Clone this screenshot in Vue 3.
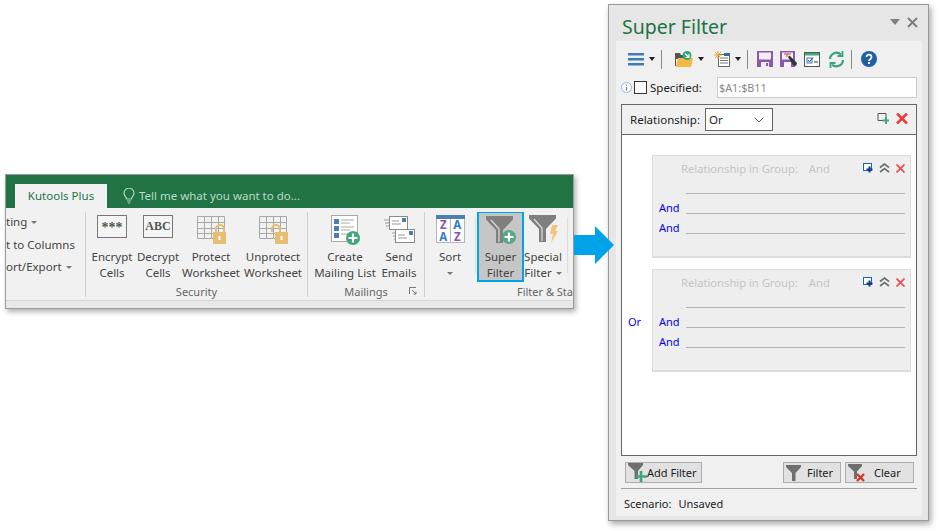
<script setup>
const groups = [{ id: 1, or: false }, { id: 2, or: true }]
</script>

<template>
  <div class="page">
    <!-- ribbon -->
    <div class="ribbon">
      <div class="tabbar">
        <div class="tab">Kutools Plus</div>
        <svg class="bulb" width="14" height="16" viewBox="0 0 14 16" fill="none" stroke="#a9d5bd" stroke-width="1.2">
          <path d="M4.5 11C4.5 8.5 2 8 2 5.2a5 5 0 0 1 10 0C12 8 9.500 8.500 9.500 11z" />
          <path d="M5 13h4M5.800 15h2.400" />
        </svg>
        <span class="tell">Tell me what you want to do...</span>
      </div>
      <div class="ribbon-body">
        <div class="rgroup g-left">
          <div class="lines">
            <div class="l1">ting <i class="drop"></i></div>
            <div class="l2">t to Columns</div>
            <div class="l3">ort/Export <i class="drop"></i></div>
          </div>
        </div>
        <div class="rgroup g-security">
          <div class="btns">
            <div class="rbtn" style="width:46px">
              <div class="ico"><div class="keybox stars">***</div></div>
              <div class="cap">Encrypt<br />Cells</div>
            </div>
            <div class="rbtn" style="width:46px">
              <div class="ico"><div class="keybox abc">ABC</div></div>
              <div class="cap">Decrypt<br />Cells</div>
            </div>
            <div class="rbtn" style="width:60px">
              <div class="ico">
                <svg width="32" height="30" viewBox="0 0 32 30" fill="none">
                  <path d="M2.500 1.500h27v22h-27zM2.500 7.500h27M2.500 13.500h27M2.500 18.500h27M9.500 1.500v22M16.500 1.500v22M23.500 1.500v22" stroke="#a8a8a8" />
                  <path d="M21 17v-3a4 4 0 0 1 8 0v3" stroke="#e6bd72" stroke-width="2" />
                  <rect x="18" y="17" width="13" height="12" fill="#e6bd72" />
                  <rect x="23.500" y="21" width="2" height="4" fill="#fff" />
                </svg>
              </div>
              <div class="cap">Protect<br />Worksheet</div>
            </div>
            <div class="rbtn" style="width:64px">
              <div class="ico">
                <svg width="32" height="30" viewBox="0 0 32 30" fill="none">
                  <path d="M2.500 1.500h27v22h-27zM2.500 7.500h27M2.500 13.500h27M2.500 18.500h27M9.500 1.500v22M16.500 1.500v22M23.500 1.500v22" stroke="#a8a8a8" />
                  <path d="M15 17v-3a4 4 0 0 1 8 0v3" stroke="#e6bd72" stroke-width="2" />
                  <rect x="18" y="17" width="13" height="12" fill="#e6bd72" />
                  <rect x="23.500" y="21" width="2" height="4" fill="#fff" />
                </svg>
              </div>
              <div class="cap">Unprotect<br />Worksheet</div>
            </div>
          </div>
          <div class="glabel">Security</div>
        </div>
        <div class="rgroup g-mail">
          <div class="btns">
            <div class="rbtn" style="width:70px">
              <div class="ico">
                <svg width="32" height="30" viewBox="0 0 32 30">
                  <rect x="2.500" y="0.500" width="26" height="26" fill="#fff" stroke="#a8a8a8" />
                  <path d="M5 4h5v5H5zM5 11h5v5H5zM5 18h5v5H5z" fill="#4a7fb5" />
                  <path d="M12 5h13M12 8h9M12 12h13M12 15h9M12 19h7" stroke="#a8a8a8" fill="none" />
                  <circle cx="24" cy="23" r="7" fill="#3fa77a" />
                  <path d="M24 18.500v9M19.500 23h9" stroke="#fff" stroke-width="2.200" />
                </svg>
              </div>
              <div class="cap">Create<br />Mailing List</div>
            </div>
            <div class="rbtn" style="width:38px">
              <div class="ico">
                <svg width="32" height="30" viewBox="0 0 32 30">
                  <path d="M1 5h5M2 8h4M3 11h3M9 18h4M10 21h3M11 24h2" stroke="#999" fill="none" />
                  <rect x="6.500" y="1.500" width="18" height="13" fill="#fff" stroke="#8a8a8a" />
                  <path d="M9 6h7M9 9h9" stroke="#999" fill="none" />
                  <rect x="19" y="3" width="4" height="4" fill="#4a7fb5" />
                  <rect x="12.500" y="14.500" width="19" height="13" fill="#fff" stroke="#8a8a8a" />
                  <path d="M15 20h7M15 23h9" stroke="#999" fill="none" />
                  <rect x="26" y="16" width="4" height="4" fill="#4a7fb5" />
                </svg>
              </div>
              <div class="cap">Send<br />Emails</div>
            </div>
          </div>
          <div class="glabel">Mailings</div>
          <svg class="launcher" width="8" height="8" viewBox="0 0 8 8" fill="none" stroke="#777">
            <path d="M.5 7V.5H7M3 3l4 4M4.500 7H7V4.500" />
          </svg>
        </div>
        <div class="rgroup g-filter">
          <div class="btns">
            <div class="rbtn" style="width:46px">
              <div class="sort">
                <div class="sortbar"></div>
                <div class="sortgrid">
                  <div class="sc"><b class="pu">Z</b><b class="bl">A</b></div>
                  <div class="sc"><b class="bl">A</b><b class="pu">Z</b></div>
                </div>
              </div>
              <div class="cap">Sort<br /><i class="drop"></i></div>
            </div>
            <i class="minisep"></i>
            <div class="rbtn super" style="width:47px">
              <div class="ico">
                <svg width="32" height="30" viewBox="0 0 32 30">
                  <path d="M1 0h27v3.500L18 14v13h-7V14L1 3.500z" fill="#7f7f7f" />
                  <path d="M6 4l8 9v13" fill="none" stroke="#d8d8d8" stroke-width="1.300" />
                  <circle cx="24" cy="21" r="7" fill="#54a884" />
                  <path d="M24 16.500v9M19.500 21h9" stroke="#fff" stroke-width="2.200" />
                </svg>
              </div>
              <div class="cap">Super<br />Filter</div>
            </div>
            <div class="rbtn" style="width:38px">
              <div class="ico">
                <svg width="32" height="30" viewBox="0 0 32 30">
                  <path d="M2 0h27v3.500L19 14v13h-7V14L2 3.500z" fill="#7f7f7f" />
                  <path d="M7 4l8 9v13" fill="none" stroke="#d8d8d8" stroke-width="1.300" />
                  <path d="M25 10h6l-3 6h3l-7 12 2-9h-3z" fill="#efc67b" />
                </svg>
              </div>
              <div class="cap">Special<br />Filter <i class="drop"></i></div>
            </div>
            <i class="minisep endsep"></i>
          </div>
          <div class="glabel cut">Filter &amp; Sta</div>
        </div>
      </div>
      <div class="ribbon-foot"></div>
    </div>

    <!-- arrow -->
    <svg class="arrow" width="40" height="38" viewBox="0 0 40 38">
      <path d="M0 9h21V0l19 19-19 19V29H0z" fill="#00a2e8" />
    </svg>

    <!-- panel -->
    <div class="panel">
      <div class="ptitle">
        <span class="ptext">Super Filter</span>
        <span class="pctrl">
          <svg width="10" height="6" viewBox="0 0 10 6"><path d="M0 0h10L5 6z" fill="#7f7f7f" /></svg>
          <svg width="11" height="11" viewBox="0 0 11 11"><path d="M1 1l9 9M10 1l-9 9" stroke="#7f7f7f" stroke-width="2" /></svg>
        </span>
      </div>
      <div class="pinner">
        <div class="toolbar">
          <svg class="t-menu" width="16" height="13" viewBox="0 0 16 13"><path d="M0 0h16v2.500H0zM0 5h16v2.500H0zM0 10h16v2.500H0z" fill="#3f7cbd" /></svg>
          <i class="caret"></i>
          <i class="tsep"></i>
          <svg class="t-folder" width="18" height="16" viewBox="0 0 18 16">
            <path d="M0 2h5l1 2h4v4H1v7H0z" fill="#555" />
            <path d="M1 15l2-8h15l-2 9H1z" fill="#f4b942" />
            <circle cx="12" cy="4.500" r="4.500" fill="#2fa37a" />
            <path d="M10 2.500l3.500 3.500M14 3v3.500h-3.500" stroke="#fff" stroke-width="1.200" fill="none" />
          </svg>
          <i class="caret"></i>
          <svg class="t-new" width="16" height="16" viewBox="0 0 16 16">
            <rect x="4.500" y="3.500" width="11" height="12" fill="#fff" stroke="#666" />
            <path d="M6 7h8M6 9.500h8M6 12h8" stroke="#777" fill="none" />
            <rect x="10" y="2" width="6" height="3" fill="#2f6d9e" />
            <path d="M4 0v8M0 4h8M1 1l6 6M7 1L1 7" stroke="#eea23a" fill="none" />
          </svg>
          <i class="caret"></i>
          <i class="tsep"></i>
          <svg class="t-save" width="16" height="16" viewBox="0 0 16 16">
            <path d="M0 0h16v16H0z" fill="#8a5aa8" />
            <path d="M2 1.500h12v7H2z" fill="#f3edf7" />
            <path d="M4 11h8v5H4z" fill="#f3edf7" />
            <path d="M9 12h2v3H9z" fill="#8a5aa8" />
          </svg>
          <svg class="t-saveas" width="17" height="16" viewBox="0 0 17 16">
            <path d="M0 0h15v16H0z" fill="#8a5aa8" />
            <path d="M2 1.500h11v7H2z" fill="#f7f3fa" />
            <path d="M4 11h7v5H4z" fill="#f7f3fa" />
            <path d="M4 3h7M7 3v3" stroke="#d23c3c" fill="none" />
            <path d="M8 6l1.500-1.500L17 12l-1 3-3-1z" fill="#333" />
          </svg>
          <svg class="t-form" width="16" height="15" viewBox="0 0 16 15">
            <rect x="0.500" y="0.500" width="15" height="14" fill="#fff" stroke="#555" />
            <rect x="1" y="1" width="14" height="2.500" fill="#3fa77a" />
            <rect x="3" y="6" width="5" height="5" fill="#fff" stroke="#3f7cbd" />
            <path d="M4 8l1.500 2L9 5.500" stroke="#1f4f86" fill="none" />
            <path d="M10 10h4" stroke="#333" />
          </svg>
          <svg class="t-sync" width="17" height="17" viewBox="0 0 17 17" fill="none" stroke="#36a57c" stroke-width="2.200">
            <path d="M2 8a6.500 6.500 0 0 1 11-4.500" />
            <path d="M15 9a6.500 6.500 0 0 1-11 4.500" />
            <path d="M14.500 0v5h-5M2.500 17v-5h5" stroke-width="1.800" />
          </svg>
          <i class="tsep"></i>
          <svg class="t-help" width="16" height="16" viewBox="0 0 16 16">
            <circle cx="8" cy="8" r="8" fill="#1f5fa5" />
            <path d="M5.500 6a2.500 2.500 0 1 1 3.800 2.200C8.500 8.700 8 9 8 10" stroke="#fff" stroke-width="1.800" fill="none" />
            <rect x="7" y="11" width="2" height="2" fill="#fff" />
          </svg>
        </div>

        <div class="specrow">
          <svg width="11" height="11" viewBox="0 0 11 11">
            <circle cx="5.500" cy="5.500" r="5" fill="#fff" stroke="#8fb4dc" />
            <path d="M5.500 2.500v1.200M5.500 5v3.500" stroke="#4a7fb5" />
          </svg>
          <i class="chk"></i>
          <span class="speclabel">Specified:</span>
          <div class="specinput">$A1:$B11</div>
        </div>

        <div class="box">
          <div class="relrow">
            <span>Relationship:</span>
            <div class="select">
              <span>Or</span>
              <svg width="10" height="6" viewBox="0 0 10 6" fill="none" stroke="#555"><path d="M.5.500L5 5 9.500.5" /></svg>
            </div>
            <span class="relicons">
              <svg width="12" height="11" viewBox="0 0 12 11">
                <path d="M8 7.500H1V.5h8v4" fill="none" stroke="#555" />
                <path d="M9 4v7M5.500 7.500H12" stroke="#3fa77a" stroke-width="2" />
              </svg>
              <svg width="12" height="11" viewBox="0 0 12 11"><path d="M1 .5l10 10M11 .5l-10 10" stroke="#ee3b3b" stroke-width="2.600" /></svg>
            </span>
          </div>

          <div class="groups">
            <div v-for="g in groups" :key="g.id" class="grow">
              <div class="orcol"><span v-if="g.or">Or</span></div>
              <div class="group">
                <div class="ghead">
                  <span class="gt">Relationship in Group:</span>
                  <span class="ga">And</span>
                  <span class="gicons">
                    <svg width="10" height="10" viewBox="0 0 10 10">
                      <rect x="0.500" y="0.500" width="8" height="7" fill="#fff" stroke="#1668b5" />
                      <path d="M6.500 3.500v6M3.500 6.500h6" stroke="#123a80" stroke-width="2" />
                    </svg>
                    <svg width="11" height="10" viewBox="0 0 11 10" fill="none" stroke="#6e6e6e" stroke-width="1.600">
                      <path d="M1 4.500L5.500 1 10 4.500M1 9l4.500-3.500L10 9" />
                    </svg>
                    <svg width="9" height="9" viewBox="0 0 9 9"><path d="M.5.500l8 8M8.500.5l-8 8" stroke="#ee5050" stroke-width="1.800" /></svg>
                  </span>
                </div>
                <div class="cond"><span class="andl"></span><span class="line"></span></div>
                <div class="cond"><span class="andl">And</span><span class="line"></span></div>
                <div class="cond"><span class="andl">And</span><span class="line"></span></div>
              </div>
            </div>
          </div>
        </div>

        <div class="footbtns">
          <div class="fbtn f-add">
            <svg width="21" height="19" viewBox="0 0 21 19">
              <path d="M0 0h15v2L10 8v8H6.500V8L0 2z" fill="#6f6f6f" />
              <path d="M13 8v11M8 13.500h11" stroke="#3fa77a" stroke-width="2.600" />
            </svg>
            <span>Add Filter</span>
          </div>
          <div class="spacer"></div>
          <div class="fbtn f-filter">
            <svg width="15" height="16" viewBox="0 0 15 16">
              <path d="M0 0h15v2L9.500 8v8H6V8L0 2z" fill="#6f6f6f" />
            </svg>
            <span>Filter</span>
          </div>
          <div class="fbtn f-clear">
            <svg width="18" height="18" viewBox="0 0 18 18">
              <path d="M0 0h14v2L9 7.500V15H6V7.500L0 2z" fill="#6f6f6f" />
              <path d="M9 10l7 7M16 10l-7 7" stroke="#d8352a" stroke-width="2.400" />
            </svg>
            <span>Clear</span>
          </div>
        </div>
        <div class="scenario">
          <span>Scenario:</span><span class="sv">Unsaved</span>
        </div>
      </div>
    </div>
  </div>
</template>

<style>
html, body {
  background: #fff;
}
</style>

<style scoped>
.page {
  display: flex;
  align-items: flex-start;
  width: 939px;
  height: 531px;
  padding-left: 5px;
  box-sizing: border-box;
  overflow: hidden;
  background: #fff;
  font-family: "Noto Sans", "Open Sans", sans-serif;
  font-size: 11.5px;
  color: #222;
}

/* ribbon */
.ribbon {
  width: 569px;
  margin-top: 174px;
  flex: none;
  background: #f1f1f1;
  border: 1px solid #9a9a9a;
  box-sizing: border-box;
  box-shadow: 2px 3px 5px rgba(0, 0, 0, 0.3);
  color: #444;
}
.tabbar {
  display: flex;
  align-items: center;
  height: 33px;
  background: #217346;
}
.tab {
  align-self: flex-end;
  width: 92px;
  height: 24px;
  margin-left: 9px;
  background: #f1f1f1;
  color: #217346;
  text-align: center;
  line-height: 24px;
}
.bulb {
  margin: 8px 0 0 15px;
}
.tell {
  margin: 8px 0 0 3px;
  color: #b7dcc7;
}
.ribbon-body {
  display: flex;
  height: 92px;
  padding-top: 4px;
  box-sizing: border-box;
}
.rgroup {
  position: relative;
  flex: none;
  border-right: 1px solid #d0d0d0;
  height: 85px;
  box-sizing: border-box;
}
.g-left {
  width: 80px;
  overflow: hidden;
}
.g-security {
  width: 222px;
}
.g-mail {
  width: 117px;
}
.g-filter {
  width: 148px;
  border-right: none;
  overflow: hidden;
}
.lines {
  margin-top: -1px;
  line-height: 22.5px;
  white-space: nowrap;
}
.btns {
  display: flex;
  height: 72px;
}
.g-security .btns {
  padding-left: 3px;
}
.g-mail .btns {
  padding-left: 2px;
}
.g-filter .btns {
  padding-left: 2px;
  padding-top: 2px;
  margin-top: -2px;
}
.rbtn {
  flex: none;
  display: flex;
  flex-direction: column;
  align-items: center;
  box-sizing: border-box;
  white-space: nowrap;
}
.ico {
  height: 32px;
  margin-top: 3px;
  display: flex;
  align-items: flex-start;
  justify-content: center;
}
.cap {
  margin-top: 2px;
  line-height: 16px;
  text-align: center;
}
.glabel {
  text-align: center;
  color: #666;
  line-height: 16px;
  font-size: 11px;
}
.g-filter .glabel.cut {
  text-align: right;
}
.launcher {
  position: absolute;
  right: 7px;
  bottom: 2px;
}
.keybox {
  width: 30px;
  height: 23px;
  border: 1px solid #777;
  background: #f4f4f4;
  box-sizing: border-box;
  text-align: center;
  font-family: "Liberation Serif", serif;
  font-weight: bold;
  color: #555;
}
.stars {
  font-size: 14px;
  line-height: 23px;
}
.abc {
  font-size: 12px;
  line-height: 21px;
}
.drop {
  display: inline-block;
  width: 0;
  height: 0;
  border: 3px solid transparent;
  border-top: 3px solid #777;
  border-bottom: none;
  vertical-align: 2px;
  margin-left: 1px;
}
.minisep {
  width: 1px;
  height: 56px;
  margin: 5px 1px 0 2px;
  background: #dcdcdc;
  flex: none;
}
.endsep {
  margin-left: 5px;
}
.super {
  height: 71px;
  margin-top: -1px;
  border: 2px solid #00a2e8;
  background: #c6c6c6;
}
.super .ico {
  margin-top: 3px;
}
.super .cap {
  margin-top: 3px;
}
.sort {
  width: 29px;
  height: 28px;
  margin-top: 3px;
  margin-bottom: 4px;
  border: 1px solid #b5b5b5;
  border-top: none;
  background: #fff;
  box-sizing: border-box;
}
.sortbar {
  height: 4px;
  margin: 0 -1px;
  background: #4a7fb5;
}
.sortgrid {
  display: grid;
  grid-template-columns: 1fr 1fr;
}
.sc {
  display: flex;
  flex-direction: column;
  align-items: center;
  height: 23px;
  line-height: 11.5px;
  font-size: 11.5px;
}
.sc + .sc {
  border-left: 1px solid #b5b5b5;
}
.sc b {
  font-weight: 700;
}
.pu {
  color: #8a4fb5;
}
.bl {
  color: #2f7cc9;
}
.ribbon-foot {
  height: 7px;
  background: #e8e8e8;
  border-top: 1px solid #d6d6d6;
}

/* arrow */
.arrow {
  flex: none;
  margin-top: 226px;
  margin-right: -6px;
  position: relative;
  z-index: 1;
}

/* panel */
.panel {
  width: 321px;
  height: 517px;
  margin-top: 4px;
  flex: none;
  display: flex;
  flex-direction: column;
  background: #e6e6e6;
  border: 1px solid #9a9a9a;
  box-sizing: border-box;
  box-shadow: 2px 3px 6px rgba(0, 0, 0, 0.35);
  color: #222;
}
.ptitle {
  height: 36px;
  flex: none;
  display: flex;
  align-items: center;
  justify-content: space-between;
  padding: 0 10px 0 13px;
}
.ptext {
  font-size: 19.5px;
  color: #217346;
  margin-top: 7px;
}
.pctrl {
  display: flex;
  align-items: center;
  gap: 7px;
  margin-top: -2px;
}
.pinner {
  flex: 1;
  min-height: 0;
  margin: 0 6px 4px 7px;
  padding: 0 5px;
  background: #f0f0f0;
  display: flex;
  flex-direction: column;
}
.toolbar {
  display: flex;
  align-items: center;
  height: 36px;
  flex: none;
  padding-left: 7px;
}
.caret {
  width: 0;
  height: 0;
  border: 3.5px solid transparent;
  border-top: 4px solid #222;
  border-bottom: none;
  margin-left: 5px;
}
.tsep {
  width: 1px;
  height: 19px;
  background: #888;
  margin-left: 6px;
}
.t-folder {
  margin-left: 13px;
}
.t-new {
  margin-left: 10px;
}
.t-save {
  margin-left: 9px;
}
.t-saveas {
  margin-left: 7px;
}
.t-form {
  margin-left: 7px;
}
.t-sync {
  margin-left: 8px;
}
.t-help {
  margin-left: 9px;
}
.specrow {
  display: flex;
  align-items: center;
  height: 21px;
  flex: none;
}
.chk {
  width: 13px;
  height: 13px;
  border: 1px solid #333;
  background: #fff;
  margin-left: 2px;
  box-sizing: border-box;
}
.speclabel {
  margin-left: 3px;
}
.specinput {
  margin-left: auto;
  width: 200px;
  height: 21px;
  line-height: 19px;
  box-sizing: border-box;
  border: 1px solid #ccc;
  background: #fff;
  padding-left: 1px;
  color: #888;
  font-size: 10.8px;
}
.box {
  flex: 1;
  min-height: 0;
  margin-top: 6px;
  border: 1px solid #666;
  background: #fff;
  display: flex;
  flex-direction: column;
}
.relrow {
  height: 29px;
  flex: none;
  display: flex;
  align-items: center;
  background: #f0f0f0;
  border-bottom: 1px solid #666;
  padding-left: 8px;
}
.select {
  width: 68px;
  height: 23px;
  margin-left: 5px;
  border: 1px solid #666;
  background: #fff;
  box-sizing: border-box;
  display: flex;
  align-items: center;
  justify-content: space-between;
  padding: 0 8px 0 3px;
}
.relicons {
  margin-left: auto;
  display: flex;
  align-items: center;
  gap: 7px;
  padding-right: 8px;
  margin-top: -3px;
}
.groups {
  display: flex;
  flex-direction: column;
  gap: 11px;
  padding: 20px 5px 0 6px;
}
.grow {
  display: flex;
  align-items: flex-start;
}
.orcol {
  width: 24px;
  flex: none;
  padding-top: 45px;
  color: #0000ee;
  font-size: 11px;
  line-height: 16px;
}
.group {
  flex: 1;
  height: 103px;
  box-sizing: border-box;
  background: #eeeeee;
  border: 1px solid #dcdcdc;
  border-bottom-width: 2px;
  padding: 4px 5px 0 6px;
}
.ghead {
  display: flex;
  align-items: center;
  height: 16px;
  color: #c4c4c4;
  font-size: 11.2px;
  margin-bottom: 2px;
}
.gt {
  margin-left: 22px;
}
.ga {
  margin-left: 11px;
}
.gicons {
  margin-left: auto;
  display: flex;
  align-items: center;
  gap: 6px;
}
.cond {
  display: flex;
  align-items: flex-end;
  height: 20px;
}
.andl {
  width: 27px;
  flex: none;
  color: #0000ee;
  font-size: 11px;
  line-height: 16px;
  margin-bottom: 2px;
}
.line {
  flex: 1;
  border-bottom: 1px solid #b4b4b4;
  margin-bottom: 4px;
  height: 0;
}
.footbtns {
  display: flex;
  align-items: center;
  height: 21px;
  flex: none;
  margin-top: 6px;
  padding: 0 3px 0 4px;
  gap: 4px;
}
.spacer {
  flex: 1;
}
.fbtn {
  height: 21px;
  box-sizing: border-box;
  border: 1px solid #adadad;
  background: #e1e1e1;
  display: flex;
  align-items: center;
  color: #222;
  overflow: hidden;
  white-space: nowrap;
  font-size: 11px;
}
.f-add {
  width: 77px;
  padding-left: 2px;
}
.f-add svg {
  margin-right: -2px;
}
.f-filter {
  width: 58px;
  padding-left: 2px;
  gap: 6px;
}
.f-clear {
  width: 69px;
  padding-left: 2px;
  gap: 8px;
}
.scenario {
  flex: none;
  height: 28px;
  margin-top: 5px;
  border-top: 1px solid #a0a0a0;
  padding: 7px 0 0 3px;
  box-sizing: border-box;
  line-height: 16px;
  font-size: 11px;
}
.sv {
  margin-left: 7px;
}
</style>
